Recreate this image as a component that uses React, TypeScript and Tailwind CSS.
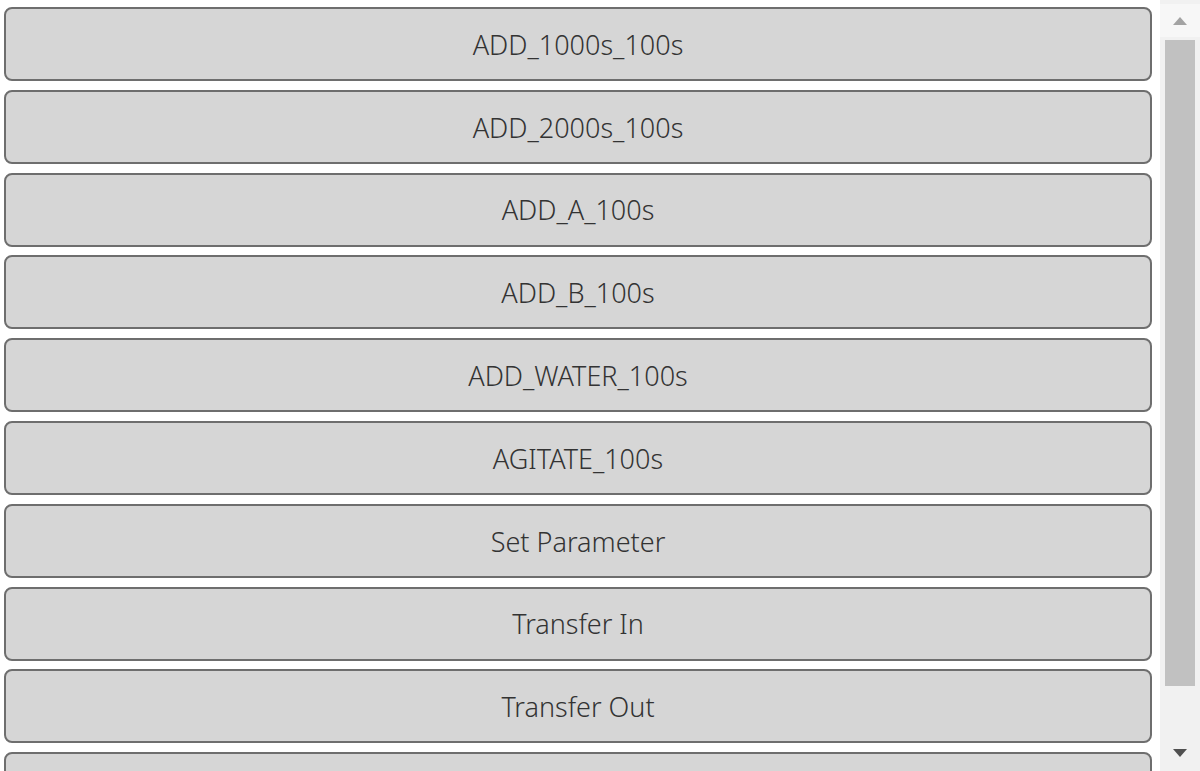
import React from "react";

const items = [
  "ADD_1000s_100s",
  "ADD_2000s_100s",
  "ADD_A_100s",
  "ADD_B_100s",
  "ADD_WATER_100s",
  "AGITATE_100s",
  "Set Parameter",
  "Transfer In",
  "Transfer Out",
  "",
];

export default function App() {
  return (
    <div className="flex h-[771px] w-[1200px] overflow-hidden bg-white" style={{ fontFamily: '"Noto Sans", "Open Sans", sans-serif' }}>
      <div className="flex min-w-0 flex-1 flex-col gap-[8.8px] overflow-hidden pl-[4px] pr-[8px] pt-[7px]">
        {items.map((t, i) => (
          <button
            key={i}
            className="flex h-[74px] w-full shrink-0 items-center justify-center rounded-[8px] border-2 border-[#6e6e6e] bg-[#d6d6d6] pt-[2px] text-[27px] font-light text-[#333333]"
          >
            {t}
          </button>
        ))}
      </div>
      <div className="flex w-[40px] shrink-0 flex-col bg-[#f1f1f1]">
        <div className="mt-[4px] flex h-[33px] items-center justify-center bg-[#f7f7f7]">
          <svg width="14" height="8" viewBox="0 0 14 8">
            <polygon points="7,0 14,8 0,8" fill="#a3a3a3" />
          </svg>
        </div>
        <div className="mx-[5px] mt-[3px] h-[646px] bg-[#c1c1c1]" />
        <div className="flex flex-1 items-end justify-center pb-[14px]">
          <svg width="14" height="8" viewBox="0 0 14 8">
            <polygon points="0,0 14,0 7,8" fill="#505050" />
          </svg>
        </div>
      </div>
    </div>
  );
}
